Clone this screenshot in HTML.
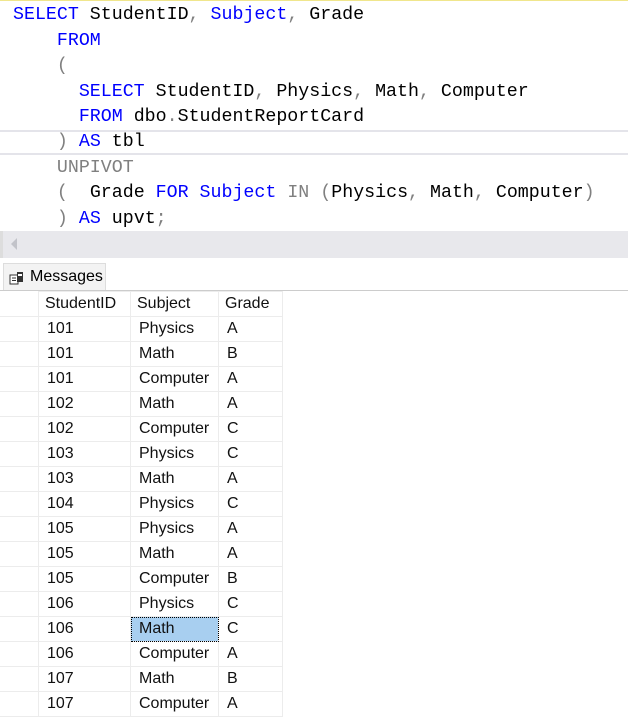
<!DOCTYPE html>
<html><head><style>
body{margin:0;width:628px;height:722px;background:#fff;overflow:hidden;position:relative;font-family:"Liberation Sans",sans-serif}
.code{position:absolute;left:0;top:0;width:628px;height:231px;border-top:1px solid #f0e68c}
.ln{position:absolute;left:13px;font-family:"Liberation Mono",monospace;font-size:18.3px;white-space:pre;color:#000;line-height:22px}
.k{color:#0000ff}.g{color:#808080}
.hl{position:absolute;left:0;width:628px;height:2px;background:#e4e4ea}
.sb{position:absolute;left:0;top:231px;width:628px;height:27px;background:#e8e8ec}
.tab{position:absolute;left:3px;top:263px;width:101px;height:26px;background:#f3f3f3;border:1px solid #ddd;border-bottom:none;font-size:16px;line-height:26px}
.rule{position:absolute;left:0;top:290px;width:628px;height:1px;background:#ccc}
table{position:absolute;left:0;top:291px;border-collapse:collapse;font-size:16px}
td{height:24px;border:1px solid #ececec;padding:0 0 0 8px;color:#111;line-height:24px;white-space:nowrap}
td:first-child{border-left:none}
tr.h td{background:#fff;color:#111;padding-left:6px}
</style></head><body>
<div class="code">
<div class="hl" style="top:129px"></div><div class="hl" style="top:152px"></div>
<div class="ln" style="top:3px"><span class="k">SELECT</span> StudentID<span class="g">,</span> <span class="k">Subject</span><span class="g">,</span> Grade</div>
<div class="ln" style="top:29px">    <span class="k">FROM</span></div>
<div class="ln" style="top:54px">    <span class="g">(</span></div>
<div class="ln" style="top:80px">      <span class="k">SELECT</span> StudentID<span class="g">,</span> Physics<span class="g">,</span> Math<span class="g">,</span> Computer</div>
<div class="ln" style="top:105px">      <span class="k">FROM</span> dbo<span class="g">.</span>StudentReportCard</div>
<div class="ln" style="top:130px">    <span class="g">)</span> <span class="k">AS</span> tbl</div>
<div class="ln" style="top:156px">    <span class="g">UNPIVOT</span></div>
<div class="ln" style="top:181px">    <span class="g">(</span>  Grade <span class="k">FOR</span> <span class="k">Subject</span> <span class="g">IN</span> <span class="g">(</span>Physics<span class="g">,</span> Math<span class="g">,</span> Computer<span class="g">)</span></div>
<div class="ln" style="top:207px">    <span class="g">)</span> <span class="k">AS</span> upvt<span class="g">;</span></div>
</div>
<div class="sb"><div style="position:absolute;left:0;top:0;width:3px;height:27px;background:#ddd"></div><div style="position:absolute;left:11px;top:7px;width:0;height:0;border-top:6px solid transparent;border-bottom:6px solid transparent;border-right:6px solid #c2c3c9"></div></div>
<div class="tab"><svg width="16" height="16" style="position:absolute;left:5px;top:6px" viewBox="0 0 16 16"><rect x="1" y="5" width="8" height="9" fill="#fff" stroke="#333"/><line x1="3" y1="8" x2="7" y2="8" stroke="#333"/><line x1="3" y1="10.5" x2="7" y2="10.5" stroke="#333"/><rect x="8" y="2" width="6" height="10" fill="#333"/><rect x="9" y="4" width="4" height="2" fill="#fff"/></svg><span style="position:absolute;left:26px">Messages</span></div>
<div class="rule"></div>
<table>
<tr class="h"><td style="width:32px;border-top:none"></td><td style="width:85px">StudentID</td><td style="width:81px">Subject</td><td style="width:57px">Grade</td></tr>
<tr><td></td><td>101</td><td>Physics</td><td>A</td></tr>
<tr><td></td><td>101</td><td>Math</td><td>B</td></tr>
<tr><td></td><td>101</td><td>Computer</td><td>A</td></tr>
<tr><td></td><td>102</td><td>Math</td><td>A</td></tr>
<tr><td></td><td>102</td><td>Computer</td><td>C</td></tr>
<tr><td></td><td>103</td><td>Physics</td><td>C</td></tr>
<tr><td></td><td>103</td><td>Math</td><td>A</td></tr>
<tr><td></td><td>104</td><td>Physics</td><td>C</td></tr>
<tr><td></td><td>105</td><td>Physics</td><td>A</td></tr>
<tr><td></td><td>105</td><td>Math</td><td>A</td></tr>
<tr><td></td><td>105</td><td>Computer</td><td>B</td></tr>
<tr><td></td><td>106</td><td>Physics</td><td>C</td></tr>
<tr><td></td><td>106</td><td style="background:#a8cff0;outline:1px dotted #000;outline-offset:-1px">Math</td><td>C</td></tr>
<tr><td></td><td>106</td><td>Computer</td><td>A</td></tr>
<tr><td></td><td>107</td><td>Math</td><td>B</td></tr>
<tr><td></td><td>107</td><td>Computer</td><td>A</td></tr>
</table>
</body></html>
